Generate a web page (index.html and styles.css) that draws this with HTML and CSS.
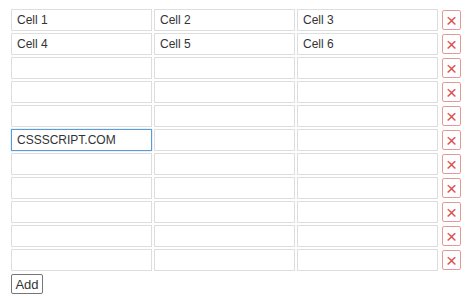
FILE: index.html
```html
<!DOCTYPE html>
<html>
<head>
  <link rel="stylesheet" href="styles.css">
</head>
<body>
  <div class="container">
    <div class="rows" id="rows">
      <div class="row">
        <input class="cell" type="text" value="Cell 1">
        <input class="cell" type="text" value="Cell 2">
        <input class="cell" type="text" value="Cell 3">
        <button class="remove" title="Remove">&times;</button>
      </div>
      <div class="row">
        <input class="cell" type="text" value="Cell 4">
        <input class="cell" type="text" value="Cell 5">
        <input class="cell" type="text" value="Cell 6">
        <button class="remove" title="Remove">&times;</button>
      </div>
      <div class="row">
        <input class="cell" type="text"><input class="cell" type="text"><input class="cell" type="text">
        <button class="remove" title="Remove">&times;</button>
      </div>
      <div class="row">
        <input class="cell" type="text"><input class="cell" type="text"><input class="cell" type="text">
        <button class="remove" title="Remove">&times;</button>
      </div>
      <div class="row">
        <input class="cell" type="text"><input class="cell" type="text"><input class="cell" type="text">
        <button class="remove" title="Remove">&times;</button>
      </div>
      <div class="row">
        <input class="cell active" type="text" value="CSSSCRIPT.COM"><input class="cell" type="text"><input class="cell" type="text">
        <button class="remove" title="Remove">&times;</button>
      </div>
      <div class="row">
        <input class="cell" type="text"><input class="cell" type="text"><input class="cell" type="text">
        <button class="remove" title="Remove">&times;</button>
      </div>
      <div class="row">
        <input class="cell" type="text"><input class="cell" type="text"><input class="cell" type="text">
        <button class="remove" title="Remove">&times;</button>
      </div>
      <div class="row">
        <input class="cell" type="text"><input class="cell" type="text"><input class="cell" type="text">
        <button class="remove" title="Remove">&times;</button>
      </div>
      <div class="row">
        <input class="cell" type="text"><input class="cell" type="text"><input class="cell" type="text">
        <button class="remove" title="Remove">&times;</button>
      </div>
      <div class="row">
        <input class="cell" type="text"><input class="cell" type="text"><input class="cell" type="text">
        <button class="remove" title="Remove">&times;</button>
      </div>
    </div>
    <button class="add" id="add">Add</button>
  </div>
</body>
</html>
```
FILE: styles.css
```css
body {
  font-family: 'Liberation Sans', Arial, sans-serif;
  margin: 0;
  padding: 0;
  color: #333;
  background: #fff;
}

.container {
  padding: 9px 0 0 11px;
}

.rows {
  display: flex;
  flex-direction: column;
  gap: 2px;
}

.row {
  display: flex;
  align-items: center;
  gap: 2px;
}

.cell {
  box-sizing: border-box;
  width: 141px;
  height: 22px;
  margin: 0;
  padding: 0 5px;
  border: 1px solid #dedede;
  border-radius: 0;
  font-family: inherit;
  font-size: 12px;
  color: #333;
  background: #fff;
  outline: none;
}

.cell.active {
  border-color: #5b9bd5;
  box-shadow: 0 0 1px #7fb2e5;
}

.remove {
  box-sizing: border-box;
  width: 19px;
  height: 20px;
  margin: 0 0 0 2px;
  padding: 0;
  border: 1px solid #e29a98;
  border-radius: 2px;
  background: #fff;
  color: #d9534f;
  font-family: 'Liberation Sans', sans-serif;
  font-size: 19px;
  line-height: 17px;
  text-align: center;
  cursor: pointer;
}

.add {
  box-sizing: border-box;
  width: 32px;
  height: 20px;
  margin-top: 3px;
  padding: 0;
  border: 1px solid #767676;
  border-radius: 2px;
  background: #fff;
  color: #333;
  font-family: inherit;
  font-size: 13px;
  cursor: pointer;
}
```
